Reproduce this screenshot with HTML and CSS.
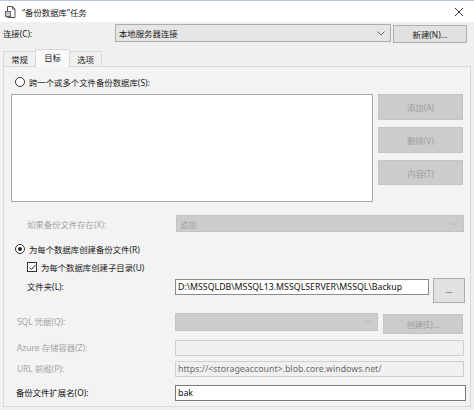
FILE: index.html
```html
<!DOCTYPE html>
<html lang="zh-CN">
<head>
<meta charset="utf-8">
<link rel="stylesheet" href="styles.css">
</head>
<body>
<div class="window">
  <div class="titlebar">
    <svg class="appicon" width="12" height="12" viewBox="0 0 12 12">
      <path d="M2.5 0.5h5l2.5 2.5v8.5h-7.5z" fill="#fff" stroke="#555" stroke-width="1"/>
      <path d="M7.5 0.5v2.5h2.5" fill="none" stroke="#555" stroke-width="1"/>
      <rect x="0.5" y="5.5" width="5" height="5" fill="#c9c9c9" stroke="#666" stroke-width="1"/>
    </svg>
    <span class="title">“备份数据库”任务</span>
    <svg class="close" width="10" height="10" viewBox="0 0 10 10">
      <path d="M1 1L9 9M9 1L1 9" stroke="#333" stroke-width="1"/>
    </svg>
  </div>

  <div class="conn">
    <span class="conn-label">连接(C):</span>
    <div class="combo combo-conn">
      <span class="combo-text">本地服务器连接</span>
      <svg class="chev" width="8" height="5" viewBox="0 0 8 5"><path d="M0.5 0.5L4 4L7.5 0.5" fill="none" stroke="#666" stroke-width="1"/></svg>
    </div>
    <div class="btn btn-new">新建(N)...</div>
  </div>

  <div class="tabs">
    <div class="tab">常规</div>
    <div class="tab tab-active">目标</div>
    <div class="tab">选项</div>
  </div>

  <div class="panel">
    <div class="row row-radio1">
      <span class="radio"></span>
      <span class="opt-text">跨一个或多个文件备份数据库(S):</span>
    </div>

    <div class="row row-list">
      <div class="listbox"></div>
      <div class="btncol">
        <div class="btn btn-dis btn-side">添加(A)</div>
        <div class="btn btn-dis btn-side">删除(V)</div>
        <div class="btn btn-dis btn-side btn-side3">内容(T)</div>
      </div>
    </div>

    <div class="row row-exist">
      <span class="lbl lbl-exist dis">如果备份文件存在(X):</span>
      <div class="combo combo-dis combo-exist">
        <span class="combo-text dis">追加</span>
        <svg class="chev" width="8" height="5" viewBox="0 0 8 5"><path d="M0.5 0.5L4 4L7.5 0.5" fill="none" stroke="#b5b5b5" stroke-width="1"/></svg>
      </div>
    </div>

    <div class="row row-radio2">
      <span class="radio radio-on"></span>
      <span class="opt-text">为每个数据库创建备份文件(R)</span>
    </div>

    <div class="row row-check">
      <span class="check">
        <svg width="9" height="9" viewBox="0 0 9 9"><path d="M1.5 4.5L3.5 6.5L7.5 1.8" fill="none" stroke="#222" stroke-width="1"/></svg>
      </span>
      <span class="opt-text">为每个数据库创建子目录(U)</span>
    </div>

    <div class="row row-folder">
      <span class="lbl lbl-folder">文件夹(L):</span>
      <div class="input input-folder latin">D:\MSSQLDB\MSSQL13.MSSQLSERVER\MSSQL\Backup</div>
      <div class="btn btn-browse">...</div>
    </div>

    <div class="row row-sql">
      <span class="lbl lbl-low dis">SQL 凭据(Q):</span>
      <div class="combo combo-dis combo-sql">
        <span class="combo-text"></span>
        <svg class="chev" width="8" height="5" viewBox="0 0 8 5"><path d="M0.5 0.5L4 4L7.5 0.5" fill="none" stroke="#b5b5b5" stroke-width="1"/></svg>
      </div>
      <div class="btn btn-dis btn-create">创建(E)...</div>
    </div>

    <div class="row row-azure">
      <span class="lbl lbl-low dis">Azure 存储容器(Z):</span>
      <div class="input input-dis input-wide"></div>
    </div>

    <div class="row row-url">
      <span class="lbl lbl-low dis">URL 前缀(P):</span>
      <div class="input input-dis input-wide url-text latin">https://&lt;storageaccount&gt;.blob.core.windows.net/</div>
    </div>

    <div class="row row-ext">
      <span class="lbl lbl-ext">备份文件扩展名(O):</span>
      <div class="input input-ext latin">bak</div>
    </div>
  </div>
</div>
</body>
</html>
```

FILE: styles.css
```css
* { box-sizing: border-box; }

html, body {
  margin: 0;
  padding: 0;
}

body {
  width: 474px;
  height: 410px;
  overflow: hidden;
  background: #f0f0f0;
  font-family: "Noto Sans", "Noto Sans CJK SC", sans-serif;
  font-size: 8.4px;
  color: #1a1a1a;
}

.latin { font-size: 8.8px; }

.window {
  width: 474px;
  height: 410px;
  display: flex;
  flex-direction: column;
}

/* Title bar */
.titlebar {
  height: 22px;
  background: #ffffff;
  border-top: 1px solid #b8c8d8;
  display: flex;
  align-items: center;
  padding-left: 5px;
  padding-right: 10px;
}

.appicon { flex: none; }

.title {
  margin-left: 5px;
  flex: 1;
  color: #222;
}

.close { flex: none; }

/* Connection row */
.conn {
  margin-top: 2px;
  height: 19px;
  display: flex;
  align-items: flex-start;
}

.conn-label {
  width: 115px;
  padding-left: 3px;
  line-height: 19px;
}

.combo {
  height: 18px;
  display: flex;
  align-items: center;
  justify-content: space-between;
  padding: 0 5px 0 3px;
  border: 1px solid #adadad;
  background: #e5e5e5;
}

.combo-conn { width: 276px; }

.combo-text { white-space: nowrap; }

.chev { flex: none; }

.btn {
  display: flex;
  align-items: center;
  justify-content: center;
  border: 1px solid #adadad;
  background: #e1e1e1;
  white-space: nowrap;
}

.btn-new {
  margin-left: 2px;
  margin-top: 1px;
  width: 74px;
  height: 18px;
}

/* Tabs */
.tabs {
  height: 23px;
  display: flex;
  align-items: flex-end;
  padding-left: 3px;
  position: relative;
  z-index: 1;
}

.tab {
  height: 15px;
  width: 33px;
  border: 1px solid #d9d9d9;
  border-bottom: none;
  background: #f0f0f0;
  display: flex;
  align-items: center;
  justify-content: center;
}

.tab-active {
  height: 18px;
  width: 35px;
  margin-bottom: -1px;
  margin-left: -1px;
  margin-right: -1px;
  background: #f9f9f9;
  border-color: #d9d9d9;
  padding-bottom: 3px;
}

/* Panel */
.panel {
  margin: 0 3px;
  width: 468px;
  height: 341px;
  border: 1px solid #d9d9d9;
  background: #f3f3f3;
  padding-left: 7px;
  display: flex;
  flex-direction: column;
}

.row {
  display: flex;
  align-items: center;
  flex: none;
}

.row-radio1 {
  margin-top: 8px;
  height: 14px;
  padding-left: 4px;
}

.radio {
  width: 10px;
  height: 10px;
  border: 1px solid #333;
  border-radius: 50%;
  background: #fff;
  flex: none;
  display: flex;
  align-items: center;
  justify-content: center;
}

.radio-on::after {
  content: "";
  width: 4px;
  height: 4px;
  border-radius: 50%;
  background: #222;
}

.opt-text {
  margin-left: 4px;
  white-space: nowrap;
}

.row-list {
  margin-top: 5px;
  align-items: flex-start;
}

.listbox {
  width: 362px;
  height: 108px;
  border: 1px solid #a8a8a8;
  background: #fff;
}

.btncol {
  margin-left: 5px;
  width: 85px;
  display: flex;
  flex-direction: column;
  gap: 7px;
}

.btn-dis {
  background: #cccccc;
  border-color: #c4c4c4;
  color: #9d9d9d;
}

.btn-side { height: 26px; }
.btn-side3 { height: 25px; }

.dis { color: #a3a3a3; }

.lbl {
  white-space: nowrap;
  flex: none;
}

.row-exist {
  margin-top: 13px;
  height: 17px;
}

.lbl-exist {
  width: 165px;
  padding-left: 16px;
}

.combo-dis {
  background: #cccccc;
  border-color: #c4c4c4;
}

.combo-exist {
  width: 288px;
  height: 17px;
}

.row-radio2 {
  margin-top: 10px;
  height: 14px;
  padding-left: 4px;
}

.row-check {
  margin-top: 4px;
  height: 14px;
  padding-left: 16px;
}

.check {
  width: 10px;
  height: 10px;
  border: 1px solid #333;
  background: #fff;
  flex: none;
  display: flex;
}

.check svg { display: block; margin: -0.5px; }

.row-folder {
  margin-top: 4px;
  height: 25px;
  align-items: flex-start;
}

.lbl-folder {
  width: 164px;
  padding-left: 16px;
  line-height: 16px;
  margin-top: 1px;
}

.input {
  height: 16px;
  border: 1px solid #b0b0b0;
  background: #fff;
  padding-left: 2px;
  display: flex;
  align-items: center;
  white-space: nowrap;
  overflow: hidden;
}

.input-folder {
  width: 254px;
  margin-top: 1px;
  border-color: #8a8a8a;
  color: #111;
}

.btn-browse {
  margin-left: 4px;
  width: 32px;
  height: 25px;
  padding-bottom: 3px;
}

.row-sql {
  margin-top: 10px;
  height: 21px;
  align-items: flex-start;
}

.lbl-low {
  width: 164px;
  padding-left: 6px;
  line-height: 18px;
}

.combo-sql {
  width: 203px;
  height: 18px;
}

.btn-create {
  margin-left: 5px;
  margin-top: 1px;
  width: 80px;
  height: 20px;
}

.row-azure {
  margin-top: 6px;
  height: 16px;
}

.row-azure .lbl-low,
.row-url .lbl-low,
.lbl-ext { line-height: 16px; }

.input-dis {
  background: #f0f0f0;
  border-color: #cfcfcf;
}

.input-wide { width: 289px; }

.url-text { color: #6d6d6d; }

.row-url {
  margin-top: 5px;
  height: 16px;
}

.row-ext {
  margin-top: 8px;
  height: 16px;
}

.lbl-ext {
  width: 164px;
  padding-left: 5px;
  color: #111;
}

.input-ext {
  width: 291px;
  border-color: #7a7a7a;
  color: #111;
}
```
